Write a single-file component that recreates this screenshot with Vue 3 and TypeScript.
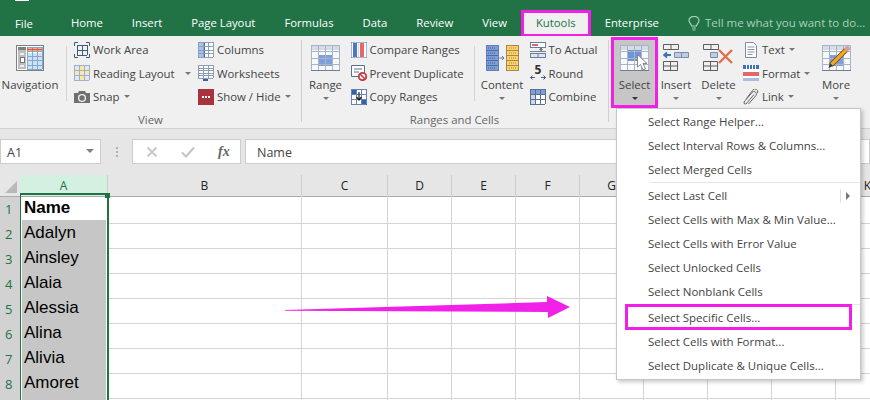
<script setup lang="ts">
const tabs = ["Home", "Insert", "Page Layout", "Formulas", "Data", "Review", "View", "Kutools", "Enterprise"];

const columns = ["A", "B", "C", "D", "E", "F", "G", "H", "I", "J", "K"];
const rows = ["Name", "Adalyn", "Ainsley", "Alaia", "Alessia", "Alina", "Alivia", "Amoret", ""];

const menuGroups = [
  ["Select Range Helper...", "Select Interval Rows & Columns...", "Select Merged Cells"],
  [
    "Select Last Cell",
    "Select Cells with Max & Min Value...",
    "Select Cells with Error Value",
    "Select Unlocked Cells",
    "Select Nonblank Cells"
  ],
  ["Select Specific Cells...", "Select Cells with Format...", "Select Duplicate & Unique Cells..."]
];

// table lines for the spreadsheet style icons
function grid(x: number, y: number, w: number, h: number, cols: number, rowCount: number): string {
  let d = "";
  for (let i = 0; i <= cols; i++) {
    const px = x + Math.round((w * i) / cols) + 0.5;
    d += `M${px} ${y}V${y + h}`;
  }
  for (let i = 0; i <= rowCount; i++) {
    const py = y + Math.round((h * i) / rowCount) + 0.5;
    d += `M${x} ${py}H${x + w}`;
  }
  return d;
}
</script>

<template>
  <div class="excel">
    <header class="titlebar">
      <div class="qat"></div>
      <nav class="tabs">
        <span class="tab file">File</span>
        <span v-for="t in tabs" :key="t" class="tab" :class="{ active: t === 'Kutools' }">{{ t }}</span>
        <span class="tell">
          <svg width="12" height="15" viewBox="0 0 12 15" fill="none" stroke="#a9d0ba" stroke-width="1.2">
            <path d="M3.6 10C3.4 8 1 7 1 4.6a5 4.3 0 0 1 10 0C11 7 8.6 8 8.4 10Z" />
            <path d="M4 12H8M4.5 14H7.5" />
          </svg>
          Tell me what you want to do...
        </span>
      </nav>
    </header>

    <section class="ribbon">
      <!-- View -->
      <div class="group g-view">
        <div class="group-body">
          <div class="big w-nav">
            <svg class="ico" width="28" height="26" viewBox="0 0 28 26">
              <rect x="0.5" y="0.5" width="27" height="25" fill="#fff" stroke="#808080" />
              <rect x="2" y="2" width="8" height="22" fill="#bdbdbd" />
              <rect x="2" y="2" width="8" height="3" fill="#808080" />
              <rect x="4.5" y="12.500" width="4" height="5" fill="#fff" stroke="#777" />
              <path d="M4 9H8M4 21H8" stroke="#fff" stroke-width="1.5" />
              <rect x="11" y="8" width="15" height="16" fill="#cfe1f3" />
              <path :d="grid(11, 2, 15, 22, 3, 5)" stroke="#7fa9d1" fill="none" />
              <path d="M11 4.5H26" stroke="#e2582c" stroke-width="2" />
            </svg>
            <span class="big-label">Navigation</span>
          </div>
          <i class="inner-sep sep-nav"></i>
          <div class="col w-c1">
            <div class="small">
              <svg class="sico" width="16" height="16" viewBox="0 0 16 16" fill="none">
                <path d="M.5 4V.5H4M12 .5H15.5V4M15.5 12V15.5H12M4 15.5H.5V12" stroke="#41597a" />
                <path :d="grid(3, 3, 10, 10, 2, 2)" stroke="#41597a" />
              </svg>
              Work Area
            </div>
            <div class="small">
              <svg class="sico" width="16" height="16" viewBox="0 0 16 16">
                <rect width="16" height="16" fill="#dfe8f4" />
                <path d="M6 0H10V16H6ZM0 5H16V9H0Z" fill="#fbe9a6" />
                <path :d="grid(0, 0, 15, 15, 3, 3)" stroke="#9fb0c8" fill="none" />
              </svg>
              Reading Layout<span class="caret far"></span>
            </div>
            <div class="small">
              <svg class="sico" width="16" height="16" viewBox="0 0 16 16">
                <path d="M0 4H4L5 2H11L12 4H16V14H0Z" fill="#6f6f6f" />
                <circle cx="8" cy="9" r="3.4" fill="#6f6f6f" stroke="#eee" stroke-width="1.4" />
              </svg>
              Snap<span class="caret"></span>
            </div>
          </div>
          <div class="col w-c2">
            <div class="small">
              <svg class="sico" width="16" height="16" viewBox="0 0 16 16">
                <rect width="16" height="16" fill="#fff" />
                <rect x="0" y="0" width="5" height="16" fill="#a8c4ee" />
                <rect x="5" y="0" width="2" height="16" fill="#3f75c9" />
                <path :d="grid(0, 0, 15, 15, 3, 4)" stroke="#8d9fb8" fill="none" />
              </svg>
              Columns
            </div>
            <div class="small">
              <svg class="sico" width="16" height="16" viewBox="0 0 16 16">
                <rect width="16" height="14" fill="#fff" />
                <path :d="grid(0, 0, 15, 13, 3, 5)" stroke="#8d9fb8" fill="none" />
                <path d="M5 15H10" stroke="#2f62b5" stroke-width="2" />
              </svg>
              Worksheets
            </div>
            <div class="small">
              <svg class="sico" width="16" height="16" viewBox="0 0 16 16">
                <rect width="16" height="16" fill="#a8323e" />
                <path d="M4 8H6M7 8H9M10 8H12" stroke="#fff" stroke-width="2" />
              </svg>
              Show / Hide<span class="caret"></span>
            </div>
          </div>
        </div>
        <div class="group-label">View</div>
      </div>
      <i class="group-sep"></i>

      <!-- Ranges and Cells -->
      <div class="group g-ranges">
        <div class="group-body">
          <div class="big w-range">
            <svg class="ico" width="29" height="26" viewBox="0 0 29 26">
              <rect width="29" height="26" fill="#f7f9fc" />
              <rect x="0" y="0" width="29" height="5" fill="#d5dbe4" />
              <rect x="7" y="10" width="15" height="11" fill="#7ea1dc" />
              <path :d="grid(0, 0, 28, 25, 4, 4)" stroke="#a9b5c6" fill="none" />
              <path d="M0 25.5H29" stroke="#6f7f95" />
            </svg>
            <span class="big-label">Range</span>
            <span class="caret low"></span>
          </div>
          <div class="col w-c3">
            <div class="small">
              <svg class="sico" width="16" height="16" viewBox="0 0 16 16">
                <rect width="16" height="16" fill="#fff" stroke="#5c6f8c" />
                <rect x="2" y="1" width="4" height="14" fill="#4a78c8" />
                <rect x="7" y="1" width="1" height="14" fill="#d9d9d9" />
                <rect x="9" y="1" width="4" height="14" fill="#e0696c" />
              </svg>
              Compare Ranges
            </div>
            <div class="small">
              <svg class="sico" width="16" height="16" viewBox="0 0 16 16">
                <path d="M.5.5H13.5V11.500H.5Z" fill="#fff" stroke="#5c6f8c" />
                <path d="M3 4H11M3 7H8" stroke="#5c6f8c" />
                <circle cx="11.500" cy="11.500" r="3.700" fill="#fff" stroke="#c8383c" stroke-width="1.800" />
                <path d="M9 9L14 14" stroke="#c8383c" stroke-width="1.600" />
              </svg>
              Prevent Duplicate
            </div>
            <div class="small">
              <svg class="sico" width="16" height="16" viewBox="0 0 16 16">
                <rect width="16" height="16" fill="#fff" />
                <rect x="0" y="0" width="5" height="5" fill="#2f62b5" />
                <rect x="11" y="11" width="5" height="5" fill="#2f62b5" />
                <path :d="grid(0, 0, 15, 15, 3, 3)" stroke="#6b83a8" fill="none" />
                <path d="M8 3V10M5.500 8L8 11L10.500 8" stroke="#222" stroke-width="1.200" fill="none" />
              </svg>
              Copy Ranges
            </div>
          </div>
          <i class="inner-sep"></i>
          <div class="big w-content">
            <svg class="ico" width="33" height="26" viewBox="0 0 33 26">
              <rect x="0.500" y="0.500" width="12" height="25" fill="#7f9ed6" stroke="#5f7fb8" />
              <path d="M0 5.500H12M0 10.500H12M0 15.500H12M0 20.500H12" stroke="#4d6ba5" />
              <path d="M2 3H10M2 8H10M2 13H10M2 18H10M2 23H10" stroke="#39588f" stroke-dasharray="1 1" />
              <rect x="20.500" y="0.500" width="12" height="25" fill="#f9d568" stroke="#a9825a" />
              <path d="M20 5.500H33M20 10.500H33M20 15.500H33M20 20.500H33" stroke="#a9825a" />
              <path d="M23 3H31M23 8H31M23 13H31M23 18H31M23 23H31" stroke="#b5841f" stroke-dasharray="1 1" />
              <path d="M13.500 13H18M16 11L18 13L16 15" stroke="#4a78c8" fill="none" />
            </svg>
            <span class="big-label">Content</span>
            <span class="caret low"></span>
          </div>
          <div class="col w-c4">
            <div class="small">
              <svg class="sico" width="16" height="16" viewBox="0 0 16 16" fill="none">
                <rect x=".5" y=".5" width="15" height="5" fill="#fff" stroke="#6b7f9c" />
                <path d="M2 3H8" stroke="#c8383c" stroke-width="1.500" />
                <path d="M11 6V9M9.500 8L11 6.500L12.500 8" stroke="#444" />
                <path d="M0 9.500H16" stroke="#6b7f9c" />
                <rect x=".5" y="11.500" width="15" height="4" fill="#dce5f2" stroke="#6b7f9c" />
                <path d="M8 12V15" stroke="#6b7f9c" />
              </svg>
              To Actual
            </div>
            <div class="small">
              <svg class="sico round" width="16" height="16" viewBox="0 0 16 16" fill="none">
                <text x="8" y="9" text-anchor="middle" class="five">5</text>
                <path d="M.5 12.500H5M2.500 10.500L.5 12.500L2.500 14.500M15.500 12.500H11M13.500 10.500L15.500 12.500L13.500 14.500" stroke="#41597a" />
              </svg>
              Round
            </div>
            <div class="small">
              <svg class="sico" width="16" height="16" viewBox="0 0 16 16">
                <rect width="16" height="16" fill="#fff" />
                <rect x="0" y="0" width="16" height="5" fill="#7ea1dc" />
                <rect x="0" y="5" width="5" height="11" fill="#c6d7f0" />
                <path :d="grid(0, 0, 15, 15, 3, 3)" stroke="#5c6f8c" fill="none" />
              </svg>
              Combine
            </div>
          </div>
        </div>
        <div class="group-label">Ranges and Cells</div>
      </div>
      <i class="group-sep"></i>

      <!-- Editing tools -->
      <div class="group g-edit">
        <div class="group-body">
          <div class="big w-select">
            <svg class="ico" width="29" height="26" viewBox="0 0 29 26">
              <rect width="29" height="26" fill="#f7f9fc" />
              <rect x="0" y="0" width="29" height="5" fill="#d5dbe4" />
              <rect x="7" y="5" width="15" height="11" fill="#6f95d8" />
              <path :d="grid(0, 0, 28, 25, 4, 4)" stroke="#a9b5c6" fill="none" />
              <path d="M0 25.500H29" stroke="#6f7f95" />
              <path d="M17.500 9.500V22L20.500 19.500L23 25L25.500 24L23 18.500H27Z" fill="#fff" stroke="#888" />
            </svg>
            <span class="big-label">Select</span>
            <span class="caret low dark"></span>
          </div>
          <div class="big w-insert">
            <svg class="ico" width="27" height="27" viewBox="0 0 27 27" fill="none">
              <path d="M.5.500H15.500V5.500H.5ZM8 .5V5.500" stroke="#5f5f5f" />
              <path d="M1 11H8M4 8.500L1 11L4 13.500" stroke="#3c72b8" stroke-width="1.800" />
              <path d="M11.500 8.500H25.500V13.500H11.500Z" fill="#bccde6" stroke="#7c8da8" />
              <path d="M18.500 8.500V13.500" stroke="#7c8da8" />
              <path d="M.5 17.500H14.500V26.500H.5ZM7.500 17.500V26.500M.5 22H14.500" stroke="#5f5f5f" />
            </svg>
            <span class="big-label">Insert</span>
            <span class="caret low"></span>
          </div>
          <div class="big w-delete">
            <svg class="ico" width="31" height="27" viewBox="0 0 31 27" fill="none">
              <path d="M.5.500H15.500V5.500H.5ZM8 .5V5.500" stroke="#5f5f5f" />
              <path d="M7.500 8.500H14.500V13.500H7.500Z" fill="#bccde6" stroke="#7c8da8" />
              <path d="M16 6L29 19M29 6L16 19" stroke="#e0704a" stroke-width="2.400" />
              <path d="M.5 17.500H14.500V26.500H.5ZM7.500 17.500V26.500M.5 22H14.500" stroke="#5f5f5f" />
            </svg>
            <span class="big-label">Delete</span>
            <span class="caret low"></span>
          </div>
          <div class="col w-c5">
            <div class="small">
              <svg class="sico" width="16" height="16" viewBox="0 0 16 16" fill="none">
                <path d="M2.500.5H10.500L13.500 3.500V15.500H2.500Z" fill="#fff" stroke="#7c8da8" />
                <path d="M4.500 5H11.500M4.500 7.500H11.500M4.500 10H11.500M4.500 12.500H9.500" stroke="#8a96a8" />
              </svg>
              Text<span class="caret"></span>
            </div>
            <div class="small">
              <svg class="sico" width="16" height="16" viewBox="0 0 16 16">
                <rect width="16" height="16" fill="#fff" />
                <rect x="0" y="0" width="16" height="4" fill="#3f6fc0" />
                <path d="M3.500 0V4M6.500 0V4M9.500 0V4M12.500 0V4" stroke="#fff" />
                <rect x="0" y="7" width="16" height="4" fill="#e06a6a" />
                <rect x="0" y="13" width="16" height="3" fill="#a9bfe0" />
              </svg>
              Format<span class="caret"></span>
            </div>
            <div class="small">
              <svg class="sico" width="16" height="16" viewBox="0 0 16 16" fill="none" stroke="#666">
                <path d="M1 13L9 3.500A2.200 2.200 0 0 1 13 6.500L5.500 15" />
                <path d="M3 15L11 5.500M3.500 9.500L9.500 1.500A2 2 0 0 1 14.500 4" />
                <path d="M1 13Q.5 15.500 3 15" />
              </svg>
              Link<span class="caret"></span>
            </div>
          </div>
          <div class="big w-more">
            <svg class="ico" width="29" height="26" viewBox="0 0 29 26">
              <rect width="29" height="26" fill="#f7f9fc" />
              <rect x="0" y="0" width="29" height="5" fill="#d5dbe4" />
              <rect x="7" y="10" width="15" height="11" fill="#7ea1dc" />
              <path :d="grid(0, 0, 28, 25, 4, 4)" stroke="#a9b5c6" fill="none" />
              <path d="M0 25.500H29" stroke="#6f7f95" />
              <path d="M9 20L24 5" stroke="#5a4a20" stroke-width="5" />
              <path d="M9 20L24 5" stroke="#f5a623" stroke-width="3.400" />
              <path d="M24 5L27 2" stroke="#d9a0a0" stroke-width="5" />
              <path d="M6.500 23L8 18L11 21Z" fill="#333" />
            </svg>
            <span class="big-label">More</span>
            <span class="caret low"></span>
          </div>
        </div>
      </div>
    </section>

    <section class="formula">
      <div class="namebox">A1<span class="namecaret"></span></div>
      <div class="grip"><i></i><i></i><i></i></div>
      <div class="fbtns">
        <svg width="12" height="12" viewBox="0 0 12 12" fill="none" stroke="#c6c6c6" stroke-width="1.800">
          <path d="M1.500 1.500L10.500 10.500M10.500 1.500L1.500 10.500" />
        </svg>
        <svg width="14" height="12" viewBox="0 0 14 12" fill="none" stroke="#c6c6c6" stroke-width="2.200">
          <path d="M1 6.500L5 10.500L13 1.500" />
        </svg>
        <span class="fx">fx</span>
      </div>
      <div class="finput">Name</div>
    </section>

    <section class="sheet">
      <div class="line head">
        <div class="corner"><i></i></div>
        <div v-for="c in columns" :key="c" class="colhead" :class="{ sel: c === 'A' }">{{ c }}</div>
      </div>
      <div v-for="(name, i) in rows" :key="i" class="line">
        <div class="rowhead">{{ i < 8 ? i + 1 : "" }}</div>
        <div class="cell a" :class="{ first: i === 0, picked: i > 0 }">{{ name }}</div>
        <div v-for="c in columns.slice(1)" :key="c" class="cell"></div>
      </div>
      <div class="selection"><i></i></div>
    </section>

    <svg class="arrow" width="300" height="30" viewBox="0 0 300 30">
      <path d="M0 15L262 7V1L285 12L263 23V17L0 15.800Z" fill="#f221e8" />
    </svg>

    <div class="menu">
      <template v-for="(group, g) in menuGroups" :key="g">
        <div v-if="g > 0" class="menu-sep"></div>
        <div v-for="item in group" :key="item" class="menu-item">
          {{ item }}
          <span v-if="item === 'Select Last Cell'" class="submenu"></span>
        </div>
      </template>
      <div class="menu-mark"></div>
    </div>
  </div>
</template>

<style scoped>
.excel {
  position: relative;
  width: 870px;
  height: 400px;
  overflow: hidden;
  background: #fff;
  font-family: "Open Sans", "Noto Sans", sans-serif;
  font-size: 11.4px;
  color: #444;
}

.titlebar {
  height: 36px;
  background: #217346;
  color: #fff;
}
.qat {
  width: 14px;
  height: 1px;
  margin-left: 15px;
  background: #fff;
}
.tabs {
  display: flex;
  gap: 29px;
  height: 26px;
  margin-top: 9px;
  line-height: 26px;
  font-size: 11.3px;
  white-space: nowrap;
}
.file {
  margin-left: 15px;
  margin-right: 9px;
  padding-top: 1px;
}
.active {
  margin: 0 -15px;
  padding: 0 12px;
  box-sizing: border-box;
  height: 26px;
  border: 3px solid #f21fe6;
  border-bottom-width: 2px;
  background: #f0f0f0;
  color: #217346;
  line-height: 20px;
}
.tell {
  display: flex;
  align-items: center;
  gap: 5px;
  font-size: 11.5px;
  color: #a9d0ba;
}

.ribbon {
  display: flex;
  height: 92px;
  background: #f0f0f0;
  border-bottom: 1px solid #d2d2d2;
}
.group {
  display: flex;
  flex-direction: column;
  flex: none;
}
.g-view {
  width: 301px;
}
.g-ranges {
  width: 306px;
}
.g-edit {
  width: 262px;
}
.group-body {
  display: flex;
  height: 76px;
}
.group-label {
  height: 16px;
  line-height: 16px;
  text-align: center;
  color: #666;
}
.group-sep {
  width: 1px;
  margin: 4px 0 6px;
  background: #cfcfcf;
}
.inner-sep {
  flex: none;
  width: 1px;
  height: 55px;
  margin-top: 10px;
  background: #d4d4d4;
}
.sep-nav {
  margin-left: 6px;
  margin-right: 7px;
}

.big {
  flex: none;
  display: flex;
  flex-direction: column;
  align-items: center;
  padding-top: 9px;
  box-sizing: border-box;
}
.ico {
  display: block;
}
.big-label {
  display: block;
  height: 16px;
  line-height: 16px;
  margin-top: 6px;
}
.w-nav {
  width: 60px;
}
.w-range {
  width: 48px;
  margin-right: 1px;
}
.w-content {
  width: 55px;
}
.w-select {
  width: 47px;
  height: 71px;
  margin: 1px 0 0 3px;
  padding-top: 5px;
  background: #c6c6c6;
  border: 3px solid #f21fe6;
}
.w-insert {
  width: 36px;
  padding-top: 8px;
}
.w-delete {
  width: 49px;
  padding-top: 8px;
}
.w-more {
  width: 44px;
}

.col {
  flex: none;
  padding-top: 2px;
}
.w-c1 {
  width: 124px;
}
.w-c2 {
  width: 103px;
}
.w-c3 {
  width: 123px;
}
.w-c4 {
  width: 77px;
}
.w-c5 {
  width: 71px;
}
.small {
  display: flex;
  align-items: center;
  height: 23.5px;
  white-space: nowrap;
}
.sico {
  flex: none;
  margin-right: 3px;
}
.round {
  overflow: visible;
}
.five {
  font-size: 12px;
  font-weight: 700;
  fill: #333;
}
.caret {
  width: 0;
  height: 0;
  margin-left: 4px;
  border: 3px solid transparent;
  border-top-color: #777;
  border-bottom-width: 0;
}
.caret.far {
  margin-left: 10px;
}
.caret.low {
  margin: 4px 0 0;
}
.caret.dark {
  border-top-color: #333;
}

.formula {
  display: flex;
  align-items: flex-start;
  height: 46px;
  padding-top: 10px;
  box-sizing: border-box;
  background: #e6e6e6;
}
.namebox,
.fbtns,
.finput {
  box-sizing: border-box;
  height: 25px;
  border: 1px solid #cdcdcd;
  background: #fff;
  line-height: 25px;
  font-size: 12.5px;
}
.namebox {
  position: relative;
  width: 101px;
  padding-left: 6px;
}
.namecaret {
  position: absolute;
  right: 6px;
  top: 9px;
  border: 4px solid transparent;
  border-top-color: #808080;
  border-bottom-width: 0;
}
.grip {
  display: flex;
  flex-direction: column;
  gap: 2px;
  width: 31px;
  padding-top: 8px;
  align-items: center;
}
.grip i {
  width: 2px;
  height: 2px;
  background: #b0b0b0;
}
.fbtns {
  display: flex;
  align-items: center;
  width: 109px;
  margin-right: 4px;
  padding-left: 13px;
  gap: 23px;
}
.fx {
  font-family: "Liberation Serif", serif;
  font-style: italic;
  font-weight: 700;
  font-size: 14px;
  color: #666;
}
.finput {
  flex: 1;
  padding-left: 11px;
}

.sheet {
  position: relative;
}
.line {
  display: grid;
  grid-template-columns: 20px 88px 194px 86px 64px 64px 64px 64px 64px 64px 64px 64px;
  height: 25px;
}
.line.head {
  height: 20px;
}
.corner {
  position: relative;
  background: #e6e6e6;
  border-bottom: 1px solid #ababab;
}
.corner i {
  position: absolute;
  right: 3px;
  bottom: 3px;
  border-style: solid;
  border-width: 0 0 12px 12px;
  border-color: transparent transparent #b9b9b9 transparent;
}
.colhead {
  box-sizing: border-box;
  background: #e6e6e6;
  border-right: 1px solid #cdcdcd;
  border-bottom: 1px solid #ababab;
  text-align: center;
  line-height: 21px;
  font-size: 12px;
  color: #222;
}
.colhead.sel {
  background: #d3f0e0;
  color: #217346;
}
.rowhead {
  box-sizing: border-box;
  background: #d2d2d2;
  border-bottom: 1px solid #ababab;
  padding-left: 5px;
  line-height: 28px;
  font-size: 13px;
  color: #217346;
}
.cell {
  box-sizing: border-box;
  border-right: 1px solid #d4d4d4;
  border-bottom: 1px solid #d4d4d4;
}
.cell.a {
  padding-left: 2px;
  font-family: "Liberation Sans", Arial, sans-serif;
  font-size: 17px;
  line-height: 26px;
  color: #000;
}
.cell.first {
  padding-left: 4px;
  font-weight: 700;
  border-right-color: #fff;
}
.cell.picked {
  border-left: 2px solid #fff;
  border-right: 2px solid #fff;
  border-bottom-color: #a6a6a6;
  background: #c6c6c6;
}
.selection {
  position: absolute;
  left: 20px;
  top: 18px;
  width: 89px;
  height: 240px;
  box-sizing: border-box;
  border: 2px solid #217346;
  border-left-width: 1px;
  border-bottom: 0;
}
.selection i {
  position: absolute;
  right: -3px;
  top: -2px;
  width: 5px;
  height: 5px;
  background: #217346;
}

.arrow {
  position: absolute;
  left: 285px;
  top: 295px;
}

.menu {
  position: absolute;
  left: 616px;
  top: 108px;
  width: 245px;
  height: 272px;
  box-sizing: border-box;
  padding-top: 1px;
  background: #fff;
  border: 1px solid #c6c6c6;
  box-shadow: 2px 2px 4px rgba(0, 0, 0, 0.22);
  font-size: 11.5px;
}
.menu-item {
  position: relative;
  height: 24px;
  padding-left: 31px;
  line-height: 23px;
  white-space: nowrap;
}
.menu-sep {
  height: 2px;
  margin-left: 32px;
  background: linear-gradient(#e6e6e6 50%, #fff 50%);
}
.submenu {
  position: absolute;
  right: 10px;
  top: 8px;
  border: 4px solid transparent;
  border-left-color: #777;
  border-right-width: 0;
}
.submenu::before {
  content: "";
  position: absolute;
  left: -10px;
  top: -7px;
  width: 1px;
  height: 14px;
  background: #e0e0e0;
}
.menu-mark {
  position: absolute;
  left: 8px;
  top: 195px;
  width: 227px;
  height: 26px;
  box-sizing: border-box;
  border: 3px solid #f21fe6;
}
</style>

<style>
html,
body {
  margin: 0;
  overflow: hidden;
}
</style>
